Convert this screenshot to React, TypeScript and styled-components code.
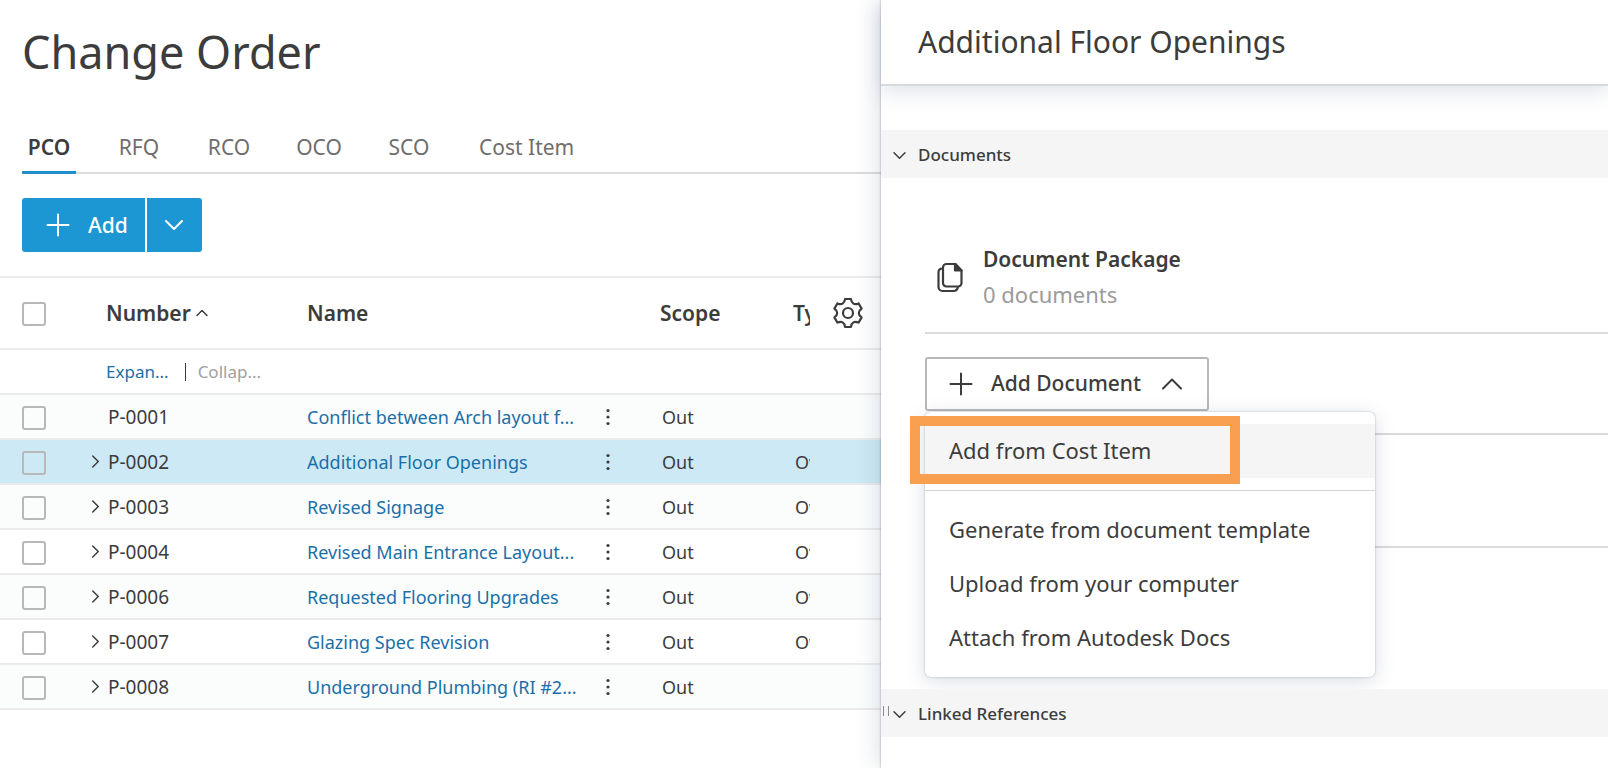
import React from 'react';
import styled, { createGlobalStyle } from 'styled-components';

const GlobalStyle = createGlobalStyle`
  *, *::before, *::after { box-sizing: border-box; }
  body {
    margin: 0;
    background: #fff;
    color: #3c3c3c;
    font-family: 'Noto Sans', sans-serif;
    font-size: 18px;
    line-height: 24px;
  }
  button { font: inherit; color: inherit; background: none; border: 0; padding: 0; cursor: pointer; }
  h1, h2, h3, p { margin: 0; font-weight: 400; }
`;

const Page = styled.div`
  display: grid;
  grid-template-columns: minmax(0, 881fr) minmax(0, 727fr);
  min-height: 100vh;
  overflow: hidden;
`;

const ListPane = styled.main`
  min-width: 0;
`;

const PageTitle = styled.h1`
  padding: 20px 22px 0;
  font-size: 45px;
  line-height: 64px;
`;

const Tabs = styled.div`
  display: flex;
  gap: 36px;
  margin: 40px 0 0 22px;
  height: 50px;
  border-bottom: 2px solid #dcdcdc;
`;

const Tab = styled.button<{ $active?: boolean }>`
  flex: none;
  min-width: 54px;
  height: 50px;
  padding: 0 0 2px;
  border-bottom: 3px solid ${p => (p.$active ? '#1f8fcf' : 'transparent')};
  color: ${p => (p.$active ? '#3c3c3c' : '#6e6e6e')};
  font-size: 21px;
  font-weight: ${p => (p.$active ? 600 : 400)};
  white-space: nowrap;

  &:last-child { padding: 0 7px 2px; }
`;

const Toolbar = styled.div`
  display: flex;
  padding: 24px 22px;
`;

const SplitButton = styled.div`
  display: flex;
  gap: 2px;
  height: 54px;
  border-radius: 3px;
  overflow: hidden;
`;

const PrimaryButton = styled.button`
  display: flex;
  align-items: center;
  gap: 18px;
  padding: 0 17px 0 24px;
  background: #1d97d4;
  color: #fff;
  font-size: 21px;
  font-weight: 500;
`;

const PrimaryToggle = styled(PrimaryButton)`
  justify-content: center;
  width: 55px;
  padding: 0;
`;

const Table = styled.table`
  width: 100%;
  table-layout: fixed;
  border-collapse: separate;
  border-spacing: 0;
  border-top: 2px solid #ebebeb;
`;

const Col = styled.col<{ $w?: number }>`
  width: ${p => (p.$w ? `${p.$w}px` : 'auto')};
`;

const HeadCell = styled.th<{ $indent?: number }>`
  height: 72px;
  padding: 0 0 0 ${p => p.$indent ?? 0}px;
  border-bottom: 2px solid #ebebeb;
  font-size: 21px;
  font-weight: 600;
  line-height: 28px;
  text-align: left;
  white-space: nowrap;
  overflow: hidden;
`;

const Row = styled.tr<{ $tone?: 'tint' | 'selected' }>`
  background: ${p => (p.$tone === 'selected' ? '#cde9f5' : p.$tone === 'tint' ? '#fbfdfd' : '#fff')};
`;

const Cell = styled.td<{ $indent?: number }>`
  height: 45px;
  padding: 0 0 0 ${p => p.$indent ?? 0}px;
  border-bottom: 2px solid #ebebeb;
  white-space: nowrap;
  overflow: hidden;
`;

const Inline = styled.div`
  display: flex;
  align-items: center;
`;

const OrderNumber = styled.span`
  font-size: 19px;
`;

const SortButton = styled.button`
  display: flex;
  align-items: center;
  gap: 4px;
  font-weight: 600;
`;

const Checkbox = styled.input`
  appearance: none;
  display: block;
  width: 24px;
  height: 24px;
  margin: 2px 0 0;
  border: 2px solid #b8b8b8;
  border-radius: 3px;
`;

const ExpandSlot = styled.span`
  display: flex;
  width: 20px;
`;

const IconButton = styled.button`
  display: flex;
`;

const Link = styled.a`
  color: #1b6fa8;
  text-decoration: none;
`;

const TextButton = styled.button<{ $muted?: boolean }>`
  color: ${p => (p.$muted ? '#a0a0a0' : '#1b6fa8')};
  font-size: 17px;
`;

const Bar = styled.span`
  width: 1px;
  height: 18px;
  margin: 0 12px 0 16px;
  background: #3c3c3c;
`;

const DetailPane = styled.aside`
  position: relative;
  z-index: 1;
  min-width: 0;
  background: #fff;
  box-shadow: 0 0 2px rgba(60, 70, 90, 0.5), 0 0 24px rgba(60, 80, 120, 0.22);
`;

const DetailHeader = styled.header`
  height: 86px;
  padding: 22px 37px;
  border-bottom: 2px solid #d6d9de;
  box-shadow: 0 6px 20px rgba(60, 80, 120, 0.16);
`;

const DetailTitle = styled.h2`
  font-size: 30px;
  line-height: 40px;
  white-space: nowrap;
`;

const SectionBar = styled.button<{ $first?: boolean }>`
  display: flex;
  align-items: center;
  gap: 11px;
  width: 100%;
  height: 48px;
  margin-top: ${p => (p.$first ? 44 : 0)}px;
  padding: 2px 0 0 11px;
  background: #f5f5f5;
  font-size: 17px;
  font-weight: 500;
`;

const SectionWrap = styled.div`
  position: relative;
`;

const ResizeHandle = styled.span`
  position: absolute;
  left: 2px;
  top: 17px;
  width: 6px;
  height: 10px;
  border: solid #8a8a8a;
  border-width: 0 1px;
`;

const SectionBody = styled.div`
  padding: 66px 0 141px 44px;
`;

const Package = styled.div`
  display: flex;
  align-items: center;
  gap: 20px;
  height: 90px;
  padding: 0 0 24px 12px;
  border-bottom: 2px solid #dadada;
`;

const PackageName = styled.h3`
  font-size: 21px;
  font-weight: 600;
  line-height: 36px;
`;

const PackageCount = styled.p`
  color: #9b9b9b;
  font-size: 22px;
  line-height: 34px;
`;

const MenuAnchor = styled.div`
  position: relative;
  width: max-content;
  margin-top: 23px;
`;

const OutlineButton = styled.button`
  display: flex;
  align-items: center;
  gap: 18px;
  height: 54px;
  padding: 0 24px 0 22px;
  border: 2px solid #b8b8b8;
  border-radius: 3px;
  font-size: 21px;
  font-weight: 500;
`;

const ButtonLabel = styled.span`
  padding: 0 2px 2px 0;
`;

const Menu = styled.div`
  position: absolute;
  top: 55px;
  left: 0;
  width: 450px;
  padding: 12px 0;
  border-radius: 6px;
  background: #fff;
  box-shadow: 0 0 2px rgba(60, 70, 90, 0.4), 0 4px 20px rgba(60, 80, 120, 0.2);
`;

const MenuItem = styled.button<{ $hover?: boolean }>`
  display: block;
  width: 100%;
  height: 54px;
  padding: 0 24px 3px;
  background: ${p => (p.$hover ? '#f5f5f5' : 'transparent')};
  font-size: 22px;
  text-align: left;
  white-space: nowrap;
`;

const MenuRule = styled.hr`
  height: 1px;
  margin: 12px 0;
  border: 0;
  background: #d4d7da;
`;

const Highlight = styled.span`
  position: absolute;
  top: 4px;
  left: -15px;
  width: 330px;
  height: 68px;
  border: 10px solid #f9a050;
  pointer-events: none;
`;

const EmptyRow = styled.div`
  height: 115px;
  margin-top: 22px;
  border: solid #dadada;
  border-width: 2px 0;
`;

const turns = { down: '', up: 'rotate(180 12 12)', right: 'rotate(-90 12 12)' };

function Chevron({ dir = 'down', w = 12, stroke = 2 }: { dir?: keyof typeof turns; w?: number; stroke?: number }) {
  const half = w / 2;
  return (
    <svg width={w + 2} height={w + 2} viewBox={`${12 - half - 1} ${12 - half - 1} ${w + 2} ${w + 2}`} fill="none"
      stroke="currentColor" strokeWidth={stroke} strokeLinecap="round" strokeLinejoin="round" aria-hidden="true">
      <path transform={turns[dir]} d={`M${12 - half + 1} ${12 - half / 2 + 0.5} L12 ${12 + half / 2 - 0.5} L${12 + half - 1} ${12 - half / 2 + 0.5}`} />
    </svg>
  );
}

const Plus = () => (
  <svg width="24" height="24" viewBox="0 0 24 24" stroke="currentColor" strokeWidth="2" strokeLinecap="round" aria-hidden="true">
    <path d="M12 1.500v21M1.500 12h21" />
  </svg>
);

const Dots = () => (
  <svg width="6" height="18" viewBox="0 0 6 18" fill="currentColor" aria-hidden="true">
    <circle cx="3" cy="2.500" r="1.600" />
    <circle cx="3" cy="9" r="1.600" />
    <circle cx="3" cy="15.500" r="1.600" />
  </svg>
);

const polar = (deg: number, r: number) => {
  const t = (deg * Math.PI) / 180;
  return `${(16 + r * Math.cos(t)).toFixed(2)} ${(16 + r * Math.sin(t)).toFixed(2)}`;
};

// Six flat-topped teeth joined by shallow concave valleys.
const gearPath = [0, 1, 2, 3, 4, 5]
  .map(k => {
    const a = -90 + k * 60;
    return `${k ? 'L' : 'M'}${polar(a - 12, 14.3)} L${polar(a + 12, 14.3)} C${polar(a + 20, 10)} ${polar(a + 40, 10)} ${polar(a + 48, 14.3)}`;
  })
  .join(' ') + 'Z';

const Gear = () => (
  <svg width="32" height="32" viewBox="0 0 32 32" fill="none" stroke="currentColor" strokeWidth="2.200" strokeLinejoin="round" aria-hidden="true">
    <path d={gearPath} />
    <circle cx="16" cy="16" r="5" />
  </svg>
);

const Documents = () => (
  <svg width="26" height="34" viewBox="0 -4 26 34" fill="none" stroke="currentColor" strokeWidth="2.200" strokeLinejoin="round" aria-hidden="true">
    <path d="M9.500 1h9L24.500 7.500v12.500a3.500 3.500 0 0 1-3.500 3.500H9.500a3.500 3.500 0 0 1-3.500-3.500v-15.500a3.500 3.500 0 0 1 3.500-3.500z" />
    <path d="M18 1V7.500H24.500z" fill="currentColor" />
    <path d="M5.500 5.500c-2.500 0-4 1.500-4 4v14.500a4 4 0 0 0 4 4h11c2.500 0 4-1.500 4.500-4" />
  </svg>
);

const tabs = ['PCO', 'RFQ', 'RCO', 'OCO', 'SCO', 'Cost Item'];

const orders = [
  { id: 'P-0001', name: 'Conflict between Arch layout f...', scope: 'Out', type: '', nested: false },
  { id: 'P-0002', name: 'Additional Floor Openings', scope: 'Out', type: 'Owner', nested: true },
  { id: 'P-0003', name: 'Revised Signage', scope: 'Out', type: 'Owner', nested: true },
  { id: 'P-0004', name: 'Revised Main Entrance Layout...', scope: 'Out', type: 'Owner', nested: true },
  { id: 'P-0006', name: 'Requested Flooring Upgrades', scope: 'Out', type: 'Owner', nested: true },
  { id: 'P-0007', name: 'Glazing Spec Revision', scope: 'Out', type: 'Owner', nested: true },
  { id: 'P-0008', name: 'Underground Plumbing (RI #2...', scope: 'Out', type: '', nested: true },
];

const selectedId = 'P-0002';

export default function App() {
  return (
    <Page>
      <GlobalStyle />
      <ListPane>
        <PageTitle>Change Order</PageTitle>
        <Tabs role="tablist">
          {tabs.map((t, i) => (
            <Tab key={t} role="tab" aria-selected={i === 0} $active={i === 0}>{t}</Tab>
          ))}
        </Tabs>
        <Toolbar>
          <SplitButton>
            <PrimaryButton><Plus />Add</PrimaryButton>
            <PrimaryToggle aria-label="More add options"><Chevron w={18} /></PrimaryToggle>
          </SplitButton>
        </Toolbar>
        <Table>
          <colgroup>
            <Col $w={85} /><Col $w={215} /><Col $w={295} /><Col $w={57} /><Col $w={133} /><Col /><Col $w={71} />
          </colgroup>
          <thead>
            <tr>
              <HeadCell $indent={22}><Checkbox type="checkbox" aria-label="Select all" /></HeadCell>
              <HeadCell $indent={21}><SortButton>Number<Chevron dir="up" w={12} stroke={1.5} /></SortButton></HeadCell>
              <HeadCell $indent={7}>Name</HeadCell>
              <HeadCell />
              <HeadCell $indent={8}>Scope</HeadCell>
              <HeadCell $indent={8}>Type</HeadCell>
              <HeadCell $indent={22}><IconButton aria-label="Table settings"><Gear /></IconButton></HeadCell>
            </tr>
          </thead>
          <tbody>
            <Row>
              <Cell />
              <Cell $indent={21}>
                <Inline>
                  <TextButton>Expan...</TextButton>
                  <Bar />
                  <TextButton $muted>Collap...</TextButton>
                </Inline>
              </Cell>
              <Cell colSpan={5} />
            </Row>
            {orders.map((o, i) => (
              <Row key={o.id} $tone={o.id === selectedId ? 'selected' : i % 2 === 0 ? 'tint' : undefined}>
                <Cell $indent={22}><Checkbox type="checkbox" aria-label={`Select ${o.id}`} /></Cell>
                <Cell $indent={3}>
                  <Inline>
                    <ExpandSlot>
                      {o.nested && <IconButton aria-label={`Expand ${o.id}`}><Chevron dir="right" w={13} stroke={1.5} /></IconButton>}
                    </ExpandSlot>
                    <OrderNumber>{o.id}</OrderNumber>
                  </Inline>
                </Cell>
                <Cell $indent={7}><Link href={`#${o.id}`}>{o.name}</Link></Cell>
                <Cell $indent={10}><IconButton aria-label={`Actions for ${o.id}`}><Dots /></IconButton></Cell>
                <Cell $indent={10}>{o.scope}</Cell>
                <Cell $indent={10}>{o.type}</Cell>
                <Cell />
              </Row>
            ))}
          </tbody>
        </Table>
      </ListPane>

      <DetailPane>
        <DetailHeader><DetailTitle>Additional Floor Openings</DetailTitle></DetailHeader>
        <SectionBar $first aria-expanded="true"><Chevron w={13} stroke={1.5} />Documents</SectionBar>
        <SectionBody>
          <Package>
            <Documents />
            <div>
              <PackageName>Document Package</PackageName>
              <PackageCount>0 documents</PackageCount>
            </div>
          </Package>
          <MenuAnchor>
            <OutlineButton aria-haspopup="menu" aria-expanded="true">
              <Plus /><ButtonLabel>Add Document</ButtonLabel><Chevron dir="up" w={20} />
            </OutlineButton>
            <Menu role="menu">
              <MenuItem role="menuitem" $hover>Add from Cost Item</MenuItem>
              <MenuRule />
              <MenuItem role="menuitem">Generate from document template</MenuItem>
              <MenuItem role="menuitem">Upload from your computer</MenuItem>
              <MenuItem role="menuitem">Attach from Autodesk Docs</MenuItem>
              <Highlight />
            </Menu>
          </MenuAnchor>
          <EmptyRow />
        </SectionBody>
        <SectionWrap>
          <SectionBar aria-expanded="true"><Chevron w={13} stroke={1.5} />Linked References</SectionBar>
          <ResizeHandle />
        </SectionWrap>
      </DetailPane>
    </Page>
  );
}
